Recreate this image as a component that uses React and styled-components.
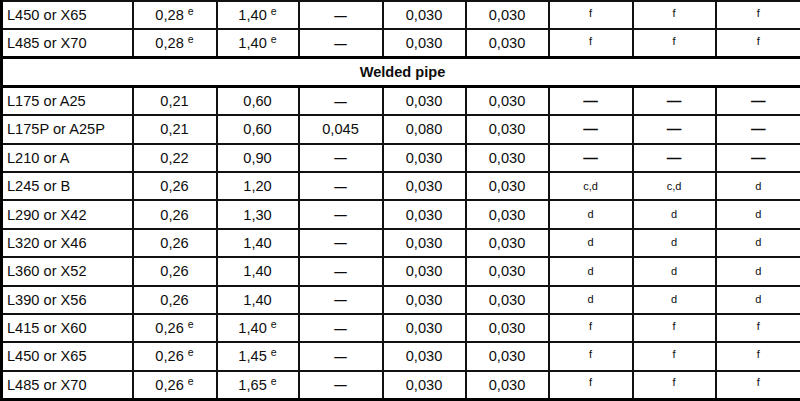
import React from "react";
import styled, { createGlobalStyle } from "styled-components";

const Global = createGlobalStyle`
  html, body { margin: 0; padding: 0; background: #fff; }
  body { font-family: "Liberation Sans", Arial, sans-serif; color: #0d0d0d; }
`;

const Table = styled.table`
  width: 800px;
  table-layout: fixed;
  border-collapse: collapse;
  border-left: 3px solid #000;
  border-right: 3px solid #000;
  border-bottom: 3px solid #000;
  border-top: 2px solid #111;
  font-size: 14.6px;
`;

const Row = styled.tr`
  height: ${(p) => (p.$head ? "29px" : "28.4px")};
`;

const Cell = styled.td`
  border: 2px solid #111;
  padding: 0 4px;
  text-align: ${(p) => (p.$left ? "left" : "center")};
  vertical-align: middle;
  white-space: nowrap;
  line-height: 16px;
`;

const HeadCell = styled.td`
  border-top: 3px solid #000;
  border-bottom: 3px solid #000;
  text-align: center;
  font-weight: bold;
  padding: 0;
  padding-left: 2px;
`;

const Sup = styled.span`
  font-size: 10.5px;
  vertical-align: 5px;
  line-height: 0;
`;

const Note = styled.span`
  font-size: 11px;
  position: relative;
  top: ${(p) => (p.$high ? "-3px" : "-1px")};
`;

const Dash = styled.span`
  font-size: ${(p) => (p.$small ? "12.5px" : "14.6px")};
  font-weight: bold;
`;

const widths = [131, 84, 82, 84, 83, 83, 84, 83, 86];

const top = [
  ["L450 or X65", "0,28e", "1,40e", "—", "0,030", "0,030", "f", "f", "f"],
  ["L485 or X70", "0,28e", "1,40e", "—", "0,030", "0,030", "f", "f", "f"],
];

const welded = [
  ["L175 or A25", "0,21", "0,60", "—", "0,030", "0,030", "—", "—", "—"],
  ["L175P or A25P", "0,21", "0,60", "0,045", "0,080", "0,030", "—", "—", "—"],
  ["L210 or A", "0,22", "0,90", "—", "0,030", "0,030", "—", "—", "—"],
  ["L245 or B", "0,26", "1,20", "—", "0,030", "0,030", "c,d", "c,d", "d"],
  ["L290 or X42", "0,26", "1,30", "—", "0,030", "0,030", "d", "d", "d"],
  ["L320 or X46", "0,26", "1,40", "—", "0,030", "0,030", "d", "d", "d"],
  ["L360 or X52", "0,26", "1,40", "—", "0,030", "0,030", "d", "d", "d"],
  ["L390 or X56", "0,26", "1,40", "—", "0,030", "0,030", "d", "d", "d"],
  ["L415 or X60", "0,26e", "1,40e", "—", "0,030", "0,030", "f", "f", "f"],
  ["L450 or X65", "0,26e", "1,45e", "—", "0,030", "0,030", "f", "f", "f"],
  ["L485 or X70", "0,26e", "1,65e", "—", "0,030", "0,030", "f", "f", "f"],
];

function renderValue(v, i) {
  if (v === "—") return <Dash $small={i === 3}>—</Dash>;
  if (i >= 6) return <Note $high={v === "f"}>{v}</Note>;
  if (v.endsWith("e"))
    return (
      <>
        {v.slice(0, -1)} <Sup>e</Sup>
      </>
    );
  return v;
}

function DataRow({ cells }) {
  return (
    <Row>
      {cells.map((v, i) => (
        <Cell key={i} $left={i === 0}>
          {i === 0 ? v : renderValue(v, i)}
        </Cell>
      ))}
    </Row>
  );
}

export default function App() {
  return (
    <>
      <Global />
      <Table>
        <colgroup>
          {widths.map((w, i) => (
            <col key={i} style={{ width: w }} />
          ))}
        </colgroup>
        <tbody>
          {top.map((r, i) => (
            <DataRow key={"t" + i} cells={r} />
          ))}
          <Row $head>
            <HeadCell colSpan={9}>Welded pipe</HeadCell>
          </Row>
          {welded.map((r, i) => (
            <DataRow key={"w" + i} cells={r} />
          ))}
        </tbody>
      </Table>
    </>
  );
}
